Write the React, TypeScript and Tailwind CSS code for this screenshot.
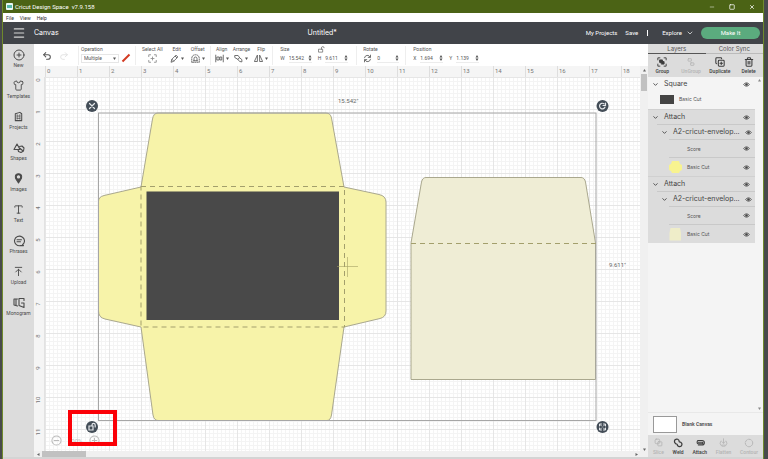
import React from 'react';
import {
  ArrowUpToLine,
  ChevronDown,
  CirclePlus,
  CopyPlus,
  Menu,
  Minus,
  Redo2,
  Shirt,
  Square,
  Trash2,
  Type,
  Undo2,
  Ungroup,
  X,
} from 'lucide-react';

type IconProps = { size?: number; className?: string; children: React.ReactNode };

function Glyph({ size = 11, className = '', children }: IconProps) {
  return (
    <svg
      width={size}
      height={size}
      viewBox="0 0 24 24"
      fill="none"
      stroke="currentColor"
      strokeWidth={2.2}
      strokeLinecap="round"
      strokeLinejoin="round"
      className={`shrink-0 ${className}`}
      aria-hidden="true"
    >
      {children}
    </svg>
  );
}

const sidebarItems = [
  { label: 'New', icon: <CirclePlus size={12} strokeWidth={2} /> },
  { label: 'Templates', icon: <Shirt size={11} /> },
  {
    label: 'Projects',
    icon: (
      <Glyph>
        <path d="M5 6l10-3 4 3v15H5z" />
        <path d="M9 11h6M9 16h6M9 8v10M15 8v10" strokeWidth="1.600" />
      </Glyph>
    ),
  },
  {
    label: 'Shapes',
    icon: (
      <Glyph size={12}>
        <path d="M8 4l6 11H2z" />
        <path d="M13 9l5-1 4 4-1 6-5 3-5-2-1-4" />
        <path d="M13 12l6 5" />
      </Glyph>
    ),
  },
  {
    label: 'Images',
    icon: (
      <Glyph>
        <path d="M12 22C9 16 5 13 5 8.500a7 7 0 0 1 14 0C19 13 15 16 12 22z" fill="currentColor" />
        <circle cx="12" cy="8.500" r="2.500" fill="#dcdcdc" stroke="#dcdcdc" />
      </Glyph>
    ),
  },
  { label: 'Text', icon: <Type size={11} /> },
  {
    label: 'Phrases',
    icon: (
      <Glyph size={12}>
        <path d="M19 19.500A10 9.500 0 1 0 15 21.200H21z" />
        <path d="M8 9.500h9M8 13.500h7" />
      </Glyph>
    ),
  },
  { label: 'Upload', icon: <ArrowUpToLine size={11} /> },
  {
    label: 'Monogram',
    icon: (
      <Glyph size={12}>
        <path d="M9 18L2 16V4h7M6 5v11" />
        <path d="M22 7V3H12v14l10 4v-9h-5" />
      </Glyph>
    ),
  },
];

const topMarks = Array.from({ length: 19 }, (_, i) => i);
const sideMarks = Array.from({ length: 12 }, (_, i) => i);

function TitleBar() {
  return (
    <div className="flex h-[13px] shrink-0 items-center bg-[#4b6315] pl-[3px] text-white">
      <span className="flex h-[7px] w-[7px] items-center justify-center rounded-[1px] bg-[#e9f7f4]">
        <span className="h-[3px] w-[5px] bg-[#58b8a8]" />
      </span>
      <span className="ml-[2px] flex-1 font-['Roboto'] text-[6px] leading-[8px]">Cricut Design Space&nbsp; v7.9.158</span>
      <div className="flex gap-[14px] pr-[8px]">
        <button aria-label="Minimize"><Minus size={6} /></button>
        <button aria-label="Maximize"><Square size={6} strokeWidth={3} /></button>
        <button aria-label="Close"><X size={6} strokeWidth={3} /></button>
      </div>
    </div>
  );
}

function MenuBar() {
  return (
    <nav className="flex h-[9px] shrink-0 items-center gap-[6px] bg-white pl-[3px] font-['Roboto'] text-[5px] leading-[8px] text-[#333]">
      <button>File</button>
      <button>View</button>
      <button>Help</button>
    </nav>
  );
}

function Header() {
  return (
    <header className="flex h-[22px] shrink-0 items-center bg-[#414449] pr-[3px] pl-[9px] text-white">
      <button aria-label="Menu"><Menu size={14} strokeWidth={2} className="text-[#d5d5d5]" /></button>
      <span className="ml-[8px] text-[7px] leading-[10px]">Canvas</span>
      <h1 className="flex-1 text-center text-[7px] leading-[10px]">Untitled*</h1>
      <div className="flex items-center font-['Roboto'] text-[6px] leading-[8px]">
        <a href="#projects">My Projects</a>
        <a href="#save" className="ml-[8px]">Save</a>
        <span className="ml-[9px] h-[6px] w-px bg-white" />
        <button className="ml-[14px] flex items-center gap-[4px]">
          Explore
          <ChevronDown size={8} />
        </button>
        <button className="ml-[7px] h-[12px] w-[59px] rounded-full bg-[#5bab7e]">Make It</button>
      </div>
    </header>
  );
}

function Sidebar() {
  return (
    <aside className="flex w-[31px] shrink-0 flex-col bg-[#dcdcdc] pt-[4px] text-[#4a4a4a]">
      {sidebarItems.map((item) => (
        <button key={item.label} className="flex h-[31px] shrink-0 flex-col items-center">
          <span className="flex h-[13px] items-center">{item.icon}</span>
          <span className="mt-[1px] font-['Roboto'] text-[5px] leading-[6px]">{item.label}</span>
        </button>
      ))}
    </aside>
  );
}

function Caret() {
  return (
    <svg width="3" height="3" viewBox="0 0 6 6" fill="currentColor" aria-hidden="true">
      <path d="M0 1h6L3 6z" />
    </svg>
  );
}

function Spinner() {
  return (
    <svg width="4" height="8" viewBox="0 0 8 16" fill="currentColor" className="shrink-0" aria-hidden="true">
      <path d="M1 7l3-5 3 5zM1 9l3 5 3-5z" />
    </svg>
  );
}

function Tool({ label, caret = true, children }: { label: string; caret?: boolean; children: React.ReactNode }) {
  return (
    <button className="flex flex-col items-center">
      <span className="leading-[7px]">{label}</span>
      <span className="flex h-[11px] items-center gap-[2px]">
        {children}
        {caret && <Caret />}
      </span>
    </button>
  );
}

function Field({ label, name, value }: { label: string; name: string; value: string }) {
  return (
    <label className="flex h-[11px] items-center gap-[4px]">
      {label}
      <span className="flex items-center border-b border-[#ececec]">
        <input aria-label={name} defaultValue={value} className="w-[19px] bg-transparent leading-[7px] outline-none" />
        <Spinner />
      </span>
    </label>
  );
}

function Toolbar() {
  return (
    <div className="flex h-[22px] shrink-0 items-start overflow-hidden bg-white pt-[2px] pl-[8px] font-['Roboto'] text-[5px] whitespace-nowrap text-[#555]">
      <div className="flex h-[19px] w-[37px] shrink-0 items-center gap-[7px] border-r border-[#eee]">
        <button aria-label="Undo"><Undo2 size={10} strokeWidth={2.500} /></button>
        <button aria-label="Redo" className="text-[#ddd]"><Redo2 size={10} /></button>
      </div>
      <div className="h-[19px] w-[57px] shrink-0 border-r border-[#eee] pl-[2px]">
        <label htmlFor="operation" className="block leading-[7px]">Operation</label>
        <div className="flex h-[10px] items-center gap-[2px]">
          <span className="flex h-[9px] w-[38px] items-center border border-[#e6e6e6] pr-[2px]">
            <select id="operation" className="min-w-0 flex-1 appearance-none bg-transparent pl-[2px] leading-[7px]">
              <option>Multiple</option>
            </select>
            <Caret />
          </span>
          <svg width="10" height="10" viewBox="0 0 10 10" aria-hidden="true">
            <path d="M1.500 8.500L8.500 1.500" stroke="#d33a22" strokeWidth="2" />
          </svg>
        </div>
      </div>
      <div className="flex h-[19px] shrink-0 gap-[7px] border-r border-[#eee] pr-[5px] pl-[6px]">
        <Tool label="Select All" caret={false}>
          <Glyph size={9} className="text-[#8a8a8a]">
            <path d="M2 7V2h5M17 2h5v5M22 17v5h-5M7 22H2v-5" />
            <path d="M12 8v8M8 12h8" />
          </Glyph>
        </Tool>
        <Tool label="Edit">
          <Glyph size={9}>
            <path d="M3 21l2-7L16 3l5 5L10 19z" />
            <path d="M14 6l4 4M5 14l5 5" />
          </Glyph>
        </Tool>
        <Tool label="Offset">
          <Glyph size={9}>
            <path d="M2 22V12C2 6 6 2 12 2s10 4 10 10v10z" strokeDasharray="3 3" />
            <path d="M7 18h10M8 18v-6a4 4 0 0 1 8 0v6" />
          </Glyph>
        </Tool>
      </div>
      <div className="flex h-[19px] shrink-0 gap-[4px] border-r border-[#eee] pr-[4px] pl-[4px]">
        <Tool label="Align">
          <Glyph size={9}>
            <path d="M2 3v18M22 3v18M6 8h5v8H6zM14 8h4v8h-4z" />
          </Glyph>
        </Tool>
        <Tool label="Arrange">
          <Glyph size={9}>
            <path d="M3 4h8l4 6-5 4-7-4z" />
            <path d="M15 10l6 5v6l-6-1-5-6" />
          </Glyph>
        </Tool>
        <Tool label="Flip">
          <Glyph size={9}>
            <path d="M9 4v16H2zM15 4v16h7z" />
          </Glyph>
        </Tool>
      </div>
      <div className="h-[19px] w-[84px] shrink-0 border-r border-[#eee] pl-[7px]">
        <div className="flex h-[7px] items-center">
          <span className="w-[38px]">Size</span>
          <Glyph size={7}>
            <path d="M3 11h13v10H3zM12 11V7a4 4 0 0 1 9-1" />
          </Glyph>
        </div>
        <div className="flex gap-[6px]">
          <Field label="W" name="Width" value="15.542" />
          <Field label="H" name="Height" value="9.611" />
        </div>
      </div>
      <div className="h-[19px] w-[49px] shrink-0 border-r border-[#eee] pl-[6px]">
        <label htmlFor="rotate" className="block leading-[7px]">Rotate</label>
        <div className="flex h-[11px] items-center gap-[5px]">
          <Glyph size={9}>
            <path d="M4 10a8 8 0 0 1 15-2M20 14a8 8 0 0 1-15 2" />
            <path d="M20 3v6h-6M4 21v-6h6" />
          </Glyph>
          <span className="flex items-center border-b border-[#ececec]">
            <input id="rotate" defaultValue="0" className="w-[18px] bg-transparent leading-[7px] outline-none" />
            <Spinner />
          </span>
        </div>
      </div>
      <div className="shrink-0 pl-[7px]">
        <div className="h-[7px] leading-[7px]">Position</div>
        <div className="flex gap-[6px]">
          <Field label="X" name="X position" value="1.694" />
          <Field label="Y" name="Y position" value="1.139" />
        </div>
      </div>
    </div>
  );
}

function Handle({ x, y, children }: { x: number; y: number; children: React.ReactNode }) {
  return (
    <g transform={`translate(${x} ${y})`}>
      <circle r="6" fill="#434d57" />
      <g fill="none" stroke="#e4e7ea" strokeWidth="1.200" strokeLinecap="round">{children}</g>
    </g>
  );
}

// Artwork is drawn in window units, one inch is 32 units
function Artwork() {
  return (
    <svg width="596" height="375" viewBox="45 77 596 375" className="absolute top-0 left-0" role="img" aria-label="Envelope design">
      <g stroke="#aaa88e" strokeWidth="1">
        <path
          fill="#f7f3a9"
          d="M141 187L152.500 119Q153.500 113 158 113H326Q330.500 113 331.500 118L344 187L379 194.500Q386 196 386 202V311Q386 317 380 318.500L344 327L331.500 415Q330.500 420.500 327 420.500H158Q154 420.500 153 415L141 327L105 319Q98.500 317.500 98.500 311V201Q98.500 197 104 195.500Z"
        />
        <path
          fill="#efedd5"
          d="M411 243L421.500 182Q422.500 177.500 426 177.500H581Q584.500 177.500 585.500 182L595.500 243V379.500H411Z"
        />
      </g>
      <rect x="98.500" y="113" width="497.500" height="307.500" fill="none" stroke="#a6a6a6" />
      <g fill="none" stroke="#a39f6c" strokeDasharray="5 4">
        <rect x="141" y="186.500" width="203.500" height="140.500" />
        <path d="M411 243.500H596" />
      </g>
      <rect x="146.500" y="191.500" width="192.500" height="128.500" fill="#494949" />
      <path d="M337 266.500H358M347.500 257V277" stroke="#a5a266" strokeOpacity="0.600" />

      <g fill="#666" fontFamily="Roboto, sans-serif" fontSize="6">
        <text x="338" y="103">15.542&quot;</text>
        <text x="609" y="267">9.611&quot;</text>
      </g>

      <Handle x={92} y={106}>
        <path d="M-2.500 -2.500L2.500 2.500M2.500 -2.500L-2.500 2.500" />
      </Handle>
      <Handle x={602.500} y={106}>
        <path d="M2.500 1A2.800 2.800 0 1 1 1.500 -2.200M3 -3V-0.500H0.500" />
      </Handle>
      <Handle x={602.500} y={427}>
        <path d="M-3 -1V-3H-1M1 -3H3V-1M3 1V3H1M-1 3H-3V1M-2.500 -2.500L-1 -1M2.500 -2.500L1 -1M2.500 2.500L1 1M-2.500 2.500L-1 1" strokeWidth="1" />
      </Handle>
      <Handle x={92} y={427}>
        <path d="M-3 -1H1V3H-3ZM0 -1V-2A1.600 1.600 0 0 1 3.200 -2V0" />
      </Handle>
    </svg>
  );
}

function Workspace() {
  return (
    <section className="flex min-h-0 min-w-0 flex-1 flex-col">
      <div className="flex h-[11px] shrink-0 overflow-hidden bg-[#f5f5f5] pl-[11px] font-['Roboto'] text-[6px] leading-[10px] text-[#777]">
        {topMarks.map((n) => (
          <span key={n} className="w-8 shrink-0 border-l border-[#dedede] pl-[1px] last:w-auto">{n}</span>
        ))}
      </div>
      <div className="flex min-h-0 flex-1">
        <div className="w-[11px] shrink-0 overflow-hidden border-r border-[#e2e2e2] bg-[#f5f5f5] font-['Roboto'] text-[6px] leading-[6px] text-[#777]">
          {sideMarks.map((n) => (
            <div key={n} className="h-8 pl-px">
              <span className="flex h-[6px] w-[6px] -rotate-90 items-center justify-center">{n}</span>
            </div>
          ))}
        </div>
        <div className="relative min-w-0 flex-1 overflow-hidden bg-white bg-[linear-gradient(to_right,#e6e6e6_1px,transparent_1px),linear-gradient(to_bottom,#e6e6e6_1px,transparent_1px),linear-gradient(to_right,#f4f4f4_1px,transparent_1px),linear-gradient(to_bottom,#f4f4f4_1px,transparent_1px)] bg-[size:32px_32px,32px_32px,4px_4px,4px_4px]">
          <div className="absolute bottom-[5px] left-[6px] flex items-center gap-[6px] font-['Roboto'] text-[6px] leading-[8px] text-[#bbb]">
            <button aria-label="Zoom out">
              <Glyph><circle cx="12" cy="12" r="10" /><path d="M7 12h10" /></Glyph>
            </button>
            <span>100%</span>
            <button aria-label="Zoom in">
              <Glyph><circle cx="12" cy="12" r="10" /><path d="M7 12h10M12 7v10" /></Glyph>
            </button>
          </div>
          <Artwork />
          <div className="absolute bottom-[5px] left-[23px] h-[36px] w-[49px] border-4 border-[#fb0007]" />
        </div>
      </div>
      <div className="flex h-[6px] shrink-0 items-center justify-between bg-[#f0f0f0] pr-[2px] pl-[3px] text-[#666]">
        <div className="flex h-full items-center gap-[2px]">
          <span className="rotate-90"><Caret /></span>
          <span className="h-full w-[44px] bg-[#c1c1c1]" />
        </div>
        <span className="-rotate-90"><Caret /></span>
      </div>
    </section>
  );
}

function Eye() {
  return (
    <button aria-label="Toggle visibility" className="ml-auto shrink-0">
      <svg width="7" height="5" viewBox="0 0 14 10" aria-hidden="true">
        <path d="M1 5Q7 -2 13 5Q7 12 1 5Z" fill="none" stroke="#555" strokeWidth="1.600" />
        <circle cx="7" cy="5" r="2.600" fill="#444" />
      </svg>
    </button>
  );
}

function GroupRow({ name, nested = false }: { name: string; nested?: boolean }) {
  return (
    <div className={`flex h-[14px] items-center gap-[5px] pr-[5px] text-[7px] leading-[10px] text-[#444] ${nested ? 'pl-[4px]' : 'pl-[4px]'}`}>
      <ChevronDown size={7} strokeWidth={3} className="shrink-0" />
      <span className="whitespace-nowrap">{name}</span>
      <Eye />
    </div>
  );
}

function AttachGroup({ swatch }: { swatch: React.ReactNode }) {
  return (
    <div className="border-t border-[#d0d0d0] bg-[#dcdcdc]">
      <GroupRow name="Attach" />
      <div className="ml-[9px] border-t border-[#c9c9c9]">
        <GroupRow name="A2-cricut-envelop..." />
      </div>
      <div className="ml-[21px] flex h-[18px] items-center border-t border-[#c9c9c9] pr-[5px] pl-[18px]">
        Score
        <Eye />
      </div>
      <div className="ml-[21px] flex h-[19px] items-center border-t border-[#c9c9c9] pr-[5px]">
        <span className="w-[18px]">{swatch}</span>
        Basic Cut
        <Eye />
      </div>
    </div>
  );
}

function PanelButton({ label, muted = false, children }: { label: string; muted?: boolean; children: React.ReactNode }) {
  return (
    <button className={`flex flex-col items-center font-['Roboto'] text-[5px] leading-[7px] font-medium ${muted ? 'text-[#b4b4b4]' : 'text-[#3c3c3c]'}`}>
      <span className="flex h-[12px] items-center">{children}</span>
      {label}
    </button>
  );
}

function LayersPanel() {
  return (
    <aside className="flex w-[115px] shrink-0 flex-col bg-[#f4f4f4] text-[5px] leading-[8px] text-[#555]">
      <div className="grid h-[10px] shrink-0 grid-cols-2 bg-[#dcdcdc] text-[6px]">
        <button className="border-b border-[#555]">Layers</button>
        <button className="border-b border-[#bbb]">Color Sync</button>
      </div>
      <div className="grid h-[23px] shrink-0 grid-cols-4 items-center bg-[#dcdcdc]">
        <PanelButton label="Group">
          <Glyph size={10}>
            <path d="M2 7V2h5M17 2h5v5M22 17v5h-5M7 22H2v-5" />
            <path d="M7 7h6v6H7zM11 11h6v6h-6z" fill="currentColor" />
          </Glyph>
        </PanelButton>
        <PanelButton label="UnGroup" muted><Ungroup size={10} /></PanelButton>
        <PanelButton label="Duplicate"><CopyPlus size={10} strokeWidth={2.500} /></PanelButton>
        <PanelButton label="Delete"><Trash2 size={10} strokeWidth={2.500} /></PanelButton>
      </div>
      <div className="flex min-h-0 flex-1">
        <div className="min-w-0 flex-1">
          <div className="h-8">
            <GroupRow name="Square" />
            <div className="flex h-[16px] items-center gap-[5px] pl-[12px]">
              <span className="h-[9px] w-[14px] bg-[#444]" />
              Basic Cut
            </div>
          </div>
          <AttachGroup
            swatch={
              <svg width="13" height="14" viewBox="0 0 13 14" aria-hidden="true">
                <path d="M3 1h7l1 3 2 1v5l-2 1-1 2H3l-1-2-2-1V5l2-1z" fill="#f8f38f" />
              </svg>
            }
          />
          <AttachGroup
            swatch={
              <svg width="13" height="14" viewBox="0 0 13 14" aria-hidden="true">
                <path d="M1.500 1h9.500l1 5v7.500H0.500V6z" fill="#efedc9" />
              </svg>
            }
          />
        </div>
        <div className="flex w-[8px] shrink-0 flex-col items-center justify-between py-[2px] text-[#888]">
          <span className="rotate-180"><Caret /></span>
          <Caret />
        </div>
      </div>
      <div className="flex h-[23px] shrink-0 items-center gap-[5px] border-t border-[#e8e8e8] pl-[5px] font-['Roboto'] font-bold">
        <span className="h-[17px] w-[24px] border border-[#999] bg-white" />
        Blank Canvas
      </div>
      <div className="flex h-[22px] shrink-0 items-center justify-between bg-[#dcdcdc] px-[5px]">
        <PanelButton label="Slice" muted>
          <Glyph size={9}><rect x="3" y="3" width="12" height="12" rx="3" /><rect x="10" y="10" width="11" height="11" rx="2" /></Glyph>
        </PanelButton>
        <PanelButton label="Weld">
          <Glyph size={10}><path d="M5 4c4-3 10-1 10 5 6 0 8 6 5 10-4 3-10 1-10-4C4 14 2 8 5 4z" strokeWidth="3" /></Glyph>
        </PanelButton>
        <PanelButton label="Attach">
          <Glyph size={10}>
            <path d="M8 17h9a5 5 0 0 0 0-11H7a5 5 0 0 0 0 8h10a2 2 0 0 0 0-4H8" strokeWidth="2.500" />
          </Glyph>
        </PanelButton>
        <PanelButton label="Flatten" muted>
          <Glyph size={9}><path d="M12 2v12M8 10l4 4 4-4M5 8a9 9 0 1 0 14 0M8 19h8" /></Glyph>
        </PanelButton>
        <PanelButton label="Contour" muted>
          <Glyph size={10}><circle cx="12" cy="12" r="9" strokeDasharray="7 3" /></Glyph>
        </PanelButton>
      </div>
    </aside>
  );
}

export default function App() {
  return (
    <div className="h-screen min-h-[300px] overflow-hidden bg-[#484a4b] pr-[4px] pl-[2px] antialiased">
      <div className="flex h-full flex-col border-x border-[#6f8a2c] bg-[#d4d4d4] pb-[2px] font-['Inter',sans-serif]">
        <TitleBar />
        <MenuBar />
        <Header />
        <div className="flex min-h-0 flex-1">
          <Sidebar />
          <main className="flex min-w-0 flex-1 flex-col">
            <Toolbar />
            <div className="flex min-h-0 flex-1">
              <Workspace />
              <div className="flex w-[8px] shrink-0 flex-col items-center bg-[#f0f0f0] pt-[3px] pb-[6px] text-[#666]">
                <span className="rotate-180"><Caret /></span>
                <span className="mt-[2px] h-[17px] w-[6px] bg-[#c1c1c1]" />
                <span className="mt-auto"><Caret /></span>
              </div>
            </div>
          </main>
          <LayersPanel />
        </div>
      </div>
    </div>
  );
}
